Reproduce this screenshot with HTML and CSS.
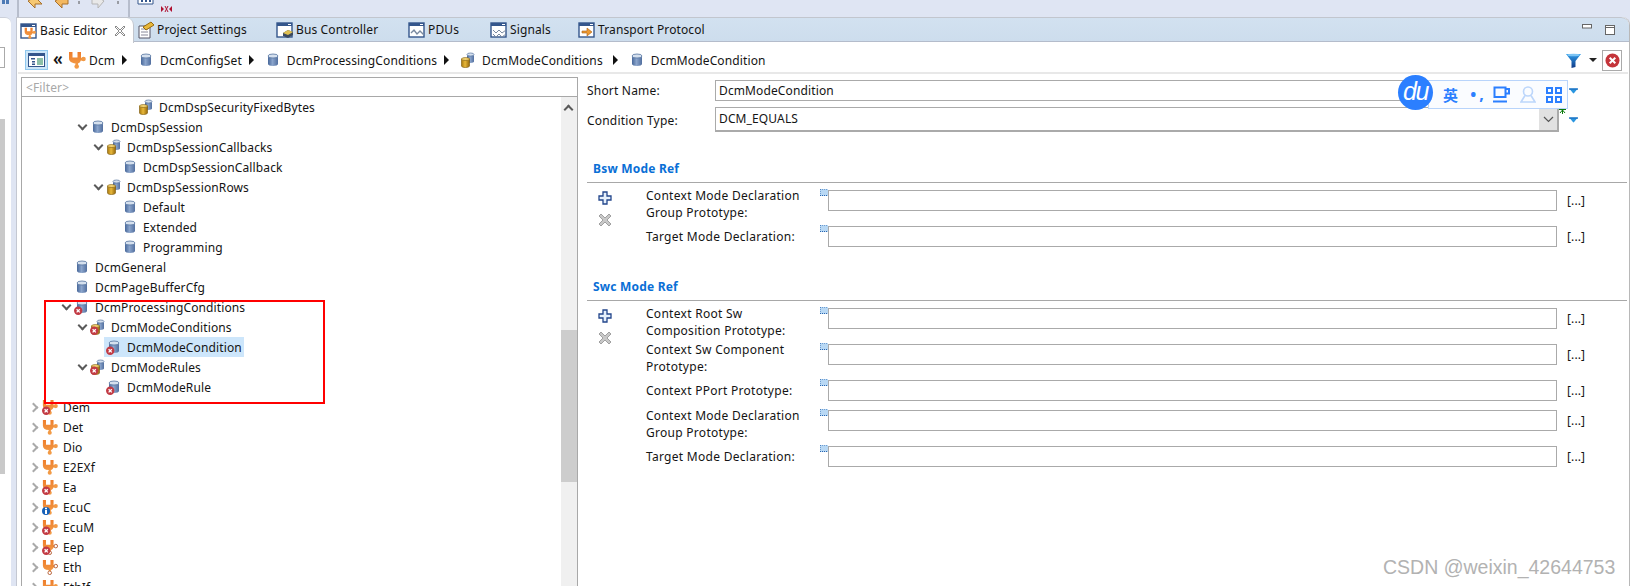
FILE: index.html
```html
<!DOCTYPE html>
<html lang="en">
<head>
<meta charset="utf-8">
<title>Basic Editor</title>
<link rel="stylesheet" href="styles.css">
</head>
<body>
<svg class="defs" aria-hidden="true">
  <defs>
    <linearGradient id="gb" x1="0" x2="1" y1="0" y2="0"><stop offset="0" stop-color="#48689a"/><stop offset=".45" stop-color="#8aa4cb"/><stop offset="1" stop-color="#526f9f"/></linearGradient>
    <linearGradient id="gy" x1="0" x2="1" y1="0" y2="0"><stop offset="0" stop-color="#a97a10"/><stop offset=".45" stop-color="#e8b83a"/><stop offset="1" stop-color="#96690c"/></linearGradient>
    <linearGradient id="gf" x1="0" x2="0" y1="0" y2="1"><stop offset="0" stop-color="#2d9be8"/><stop offset="1" stop-color="#123a86"/></linearGradient>
    <linearGradient id="go" x1="0" x2="0" y1="0" y2="1"><stop offset="0" stop-color="#ee7d2c"/><stop offset="1" stop-color="#f29a45"/></linearGradient>
    <symbol id="cyl" viewBox="0 0 16 16"><path d="M3 4v8c0 1.100 2.200 2 5 2s5-.9 5-2V4z" fill="url(#gb)"/><ellipse cx="8" cy="4" rx="5" ry="2" fill="#d5e0ee" stroke="#54739f" stroke-width=".8"/></symbol>
    <symbol id="box" viewBox="0 0 16 16"><path d="M7 2.500v7c0 .8 1.500 1.400 3.500 1.400S14 10.300 14 9.500v-7z" fill="url(#gb)"/><ellipse cx="10.500" cy="2.500" rx="3.500" ry="1.500" fill="#d5e0ee" stroke="#54739f" stroke-width=".7"/><path d="M1.500 7v7c0 .9 1.600 1.500 3.800 1.500S9.500 14.900 9.500 14V7z" fill="url(#gy)" stroke="#7a5708" stroke-width=".6"/><ellipse cx="5.500" cy="7" rx="4" ry="1.500" fill="#f0d070" stroke="#7a5708" stroke-width=".6"/></symbol>
    <symbol id="fork" viewBox="0 0 18 18"><path d="M1 1h3.500v5.500h5V1H13v6h2v2.500h-2.200c-.5 1.500-1.500 2.500-2.800 3V14H7.500v-1.500C3 12 1 10 1 7.500z" fill="url(#go)"/><circle cx="15.500" cy="8" r="2.300" fill="#f29a45"/><circle cx="8.700" cy="15.500" r="2.300" fill="#f29a45"/></symbol>
    <symbol id="fork2" viewBox="0 0 18 18"><path d="M1 1h3.500v5.500h5V1H13v6h1v2.500h-1.200c-.5 1.500-1.500 2.500-2.800 3V14H7.500v-1.500C3 12 1 10 1 7.500z" fill="url(#go)"/><circle cx="15.500" cy="8" r="2" fill="#fff" stroke="#b0552a"/><circle cx="8.700" cy="15.500" r="2" fill="#fff" stroke="#b0552a"/></symbol>
    <symbol id="err" viewBox="0 0 16 16"><circle cx="4.200" cy="11.800" r="4.200" fill="#c23a44"/><path d="M2.600 10.200l3.200 3.200m0-3.200l-3.200 3.200" stroke="#fff" stroke-width="1.300"/></symbol>
    <symbol id="info" viewBox="0 0 16 16"><circle cx="4" cy="12" r="4" fill="#1560b8"/><path d="M3 11h2v4H3zM3 8.800h2v1.400H3z" fill="#fff"/></symbol>
    <symbol id="win" viewBox="0 0 18 18"><rect x="1" y="2" width="15" height="14" fill="#fff" stroke="#34568c" stroke-width="1.400"/><path d="M1 2h15v3H1z" fill="#34568c"/><path d="M12 3h3v1h-3z" fill="#fff"/></symbol>
    <symbol id="plus" viewBox="0 0 14 14"><path d="M5 1h4v4h4v4H9v4H5V9H1V5h4z" fill="#e6f0fb" stroke="#23468c" stroke-width="1.300"/></symbol>
    <symbol id="cross" viewBox="0 0 14 14"><path d="M3 1l4 4 4-4 2 2-4 4 4 4-2 2-4-4-4 4-2-2 4-4-4-4z" fill="#c8c8c8" stroke="#a0a0a0"/></symbol>
    <symbol id="deco" viewBox="0 0 8 7"><rect width="8" height="7" fill="#b8d8f4"/><path d="M0 0h8M0 0v7M0 6.500h8" stroke="#2b66b0" stroke-dasharray="1 1"/></symbol>
    <symbol id="tri" viewBox="0 0 10 6"><path d="M0 0h10L5 6z" fill="#2a96e0"/><path d="M0 0h10v1.500H0z" fill="#1f70c0"/></symbol>
  </defs>
</svg>

<div class="page">
  <div class="toolbar">
    <svg class="toolbar-strip" viewBox="0 0 180 17" width="180" height="17">
      <path d="M2-2h3v6H2zM6-2h3v6H6z" fill="#4d7ab5"/>
      <path d="M18 0v17" stroke="#8f96a6"/>
      <path d="M28 1l7 7V4h7L35-3z" fill="#f6c872" stroke="#a8702a"/>
      <path d="M55 1l7 7V4h6V-3h-6z" fill="#f3b860" stroke="#a8702a"/>
      <path d="M79 1v3" stroke="#555"/>
      <path d="M104 1l-6 7V4h-6V-3h6z" fill="#e8e8e8" stroke="#b5b5b5"/>
      <path d="M118 1v3" stroke="#555"/>
      <path d="M129 0v17" stroke="#8f96a6"/>
      <path d="M138-2v6h15v-6" fill="#fff" stroke="#34568c"/>
      <path d="M141 0h2v2h-2zM145 0h2v2h-2zM149 0h2v2h-2z" fill="#34568c"/>
      <path d="M161 6l3 3-3 3zM172 6l-3 3 3 3z" fill="#b01030"/><path d="M165 6l3 6m0-6l-3 6" stroke="#b01030"/>
    </svg>
  </div>

  <div class="workspace">
    <aside class="side-stub">
      <div class="stub-input"></div>
      <div class="stub-thumb"></div>
    </aside>

    <main class="editor">
      <nav class="tabs">
        <div class="tab tab-active">
          <svg class="tab-ic"><use href="#win"/><use href="#fork" x="4" y="5" width="12" height="12"/></svg>
          <span>Basic Editor</span>
          <svg class="tab-close" viewBox="0 0 12 12"><path d="M2 1l4 4 4-4 1 1-4 4 4 4-1 1-4-4-4 4-1-1 4-4-4-4z" fill="#fff" stroke="#8a8a8a"/></svg>
        </div>
        <div class="tab tab-project">
          <svg class="tab-ic"><path d="M2 5h11v12H2z" fill="#fff" stroke="#556"/><path d="M4 8h7M4 11h7M4 14h7" stroke="#889"/><path d="M6 6l8-5 3 3-8 5z" fill="#e8b83a" stroke="#96690c"/></svg>
          <span>Project Settings</span>
        </div>
        <div class="tab tab-bus">
          <svg class="tab-ic"><use href="#win"/><path d="M7 12l5-3 5 2v3l-5 3-5-2z" fill="#3b4a60"/><path d="M7 12l5-3 5 2-5 3z" fill="#e0c050"/></svg>
          <span>Bus Controller</span>
        </div>
        <div class="tab tab-pdu">
          <svg class="tab-ic"><use href="#win"/><path d="M3 12l3-3 3 4 3-3 4 4" fill="none" stroke="#7a8aa0" stroke-width="1.400"/></svg>
          <span>PDUs</span>
        </div>
        <div class="tab tab-sig">
          <svg class="tab-ic"><use href="#win"/><path d="M3 9l3 3 3-3 3 3 4-3M3 13l3 3 3-3 3 3 4-3" fill="none" stroke="#7a8aa0"/></svg>
          <span>Signals</span>
        </div>
        <div class="tab tab-tp">
          <svg class="tab-ic"><use href="#win"/><path d="M4 10h5V7l5 4-5 4v-3H4z" fill="#ee9a30" stroke="#a8601a" stroke-width=".6"/></svg>
          <span>Transport Protocol</span>
        </div>
        <div class="tab-controls">
          <svg width="10" height="5" viewBox="0 0 10 5" class="min-ic"><rect x=".5" y=".5" width="9" height="3.500" fill="#fff" stroke="#666"/></svg>
          <svg width="10" height="10" viewBox="0 0 10 10" class="max-ic"><rect x=".5" y=".5" width="9" height="9" fill="#fff" stroke="#666"/><path d="M0 2.500h10" stroke="#666" stroke-width="1.200"/></svg>
        </div>
      </nav>

      <div class="crumbs">
        <button class="toggle" type="button" aria-label="Toggle tree"><svg width="17" height="14" viewBox="0 0 17 14"><rect x=".5" y=".5" width="16" height="13" fill="#fff" stroke="#34568c"/><path d="M0 0h17v3H0z" fill="#34568c"/><path d="M9 5h6v7H9z" fill="#8cc0a8"/><path d="M3 5h4v1.500H3zM4 8h3v1.500H4zM4 10.500h3V12H4z" fill="#34568c"/></svg></button>
        <span class="chev-back">«</span>
        <svg class="ic-fork"><use href="#fork"/></svg>
        <span class="crumb-text crumb-first">Dcm</span>
        <i class="crumb-arrow"></i>
        <svg class="ic"><use href="#cyl"/></svg>
        <span class="crumb-text">DcmConfigSet</span>
        <i class="crumb-arrow"></i>
        <svg class="ic"><use href="#cyl"/></svg>
        <span class="crumb-text">DcmProcessingConditions</span>
        <i class="crumb-arrow"></i>
        <svg class="ic"><use href="#box"/></svg>
        <span class="crumb-text">DcmModeConditions</span>
        <i class="crumb-arrow crumb-arrow-last"></i>
        <svg class="ic"><use href="#cyl"/></svg>
        <span class="crumb-text">DcmModeCondition</span>
        <div class="crumb-tools">
          <svg width="15" height="15" viewBox="0 0 15 15"><path d="M0 1h15L9.500 8v6l-4 1V8z" fill="url(#gf)"/><ellipse cx="7.500" cy="2" rx="6.500" ry="1.300" fill="#7cc4f4"/></svg>
          <i class="menu-tri"></i>
          <span class="err-btn"><svg width="15" height="15" viewBox="0 0 15 15"><circle cx="7.500" cy="7.500" r="7" fill="#c4343a"/><path d="M4.700 4.700l5.600 5.600m0-5.600l-5.600 5.600" stroke="#fff" stroke-width="2"/></svg></span>
        </div>
      </div>

      <div class="split">
        <section class="tree-pane">
          <div class="filter">&lt;Filter&gt;</div>
          <div class="tree-body">
            <div class="tree">
              <div class="row l6"><svg class="ic"><use href="#box"/></svg><span>DcmDspSecurityFixedBytes</span></div>
              <div class="row l3 open"><svg class="ic"><use href="#cyl"/></svg><span>DcmDspSession</span></div>
              <div class="row l4 open"><svg class="ic"><use href="#box"/></svg><span>DcmDspSessionCallbacks</span></div>
              <div class="row l5"><svg class="ic"><use href="#cyl"/></svg><span>DcmDspSessionCallback</span></div>
              <div class="row l4 open"><svg class="ic"><use href="#box"/></svg><span>DcmDspSessionRows</span></div>
              <div class="row l5"><svg class="ic"><use href="#cyl"/></svg><span>Default</span></div>
              <div class="row l5"><svg class="ic"><use href="#cyl"/></svg><span>Extended</span></div>
              <div class="row l5"><svg class="ic"><use href="#cyl"/></svg><span>Programming</span></div>
              <div class="row l2"><svg class="ic"><use href="#cyl"/></svg><span>DcmGeneral</span></div>
              <div class="row l2"><svg class="ic"><use href="#cyl"/></svg><span>DcmPageBufferCfg</span></div>
              <div class="row l2 open"><svg class="ic"><use href="#cyl"/><use href="#err"/></svg><span>DcmProcessingConditions</span></div>
              <div class="row l3 open"><svg class="ic"><use href="#box"/><use href="#err"/></svg><span>DcmModeConditions</span></div>
              <div class="row l4"><div class="selected"><svg class="ic"><use href="#cyl"/><use href="#err"/></svg><span>DcmModeCondition</span></div></div>
              <div class="row l3 open"><svg class="ic"><use href="#box"/><use href="#err"/></svg><span>DcmModeRules</span></div>
              <div class="row l4"><svg class="ic"><use href="#cyl"/><use href="#err"/></svg><span>DcmModeRule</span></div>
              <div class="row l0 shut"><svg class="ic"><use href="#fork"/><use href="#err"/></svg><span>Dem</span></div>
              <div class="row l0 shut"><svg class="ic"><use href="#fork"/></svg><span>Det</span></div>
              <div class="row l0 shut"><svg class="ic"><use href="#fork"/></svg><span>Dio</span></div>
              <div class="row l0 shut"><svg class="ic"><use href="#fork"/></svg><span>E2EXf</span></div>
              <div class="row l0 shut"><svg class="ic"><use href="#fork"/><use href="#err"/></svg><span>Ea</span></div>
              <div class="row l0 shut"><svg class="ic"><use href="#fork"/><use href="#info"/></svg><span>EcuC</span></div>
              <div class="row l0 shut"><svg class="ic"><use href="#fork"/><use href="#err"/></svg><span>EcuM</span></div>
              <div class="row l0 shut"><svg class="ic"><use href="#fork2"/><use href="#err"/></svg><span>Eep</span></div>
              <div class="row l0 shut"><svg class="ic"><use href="#fork2"/></svg><span>Eth</span></div>
              <div class="row l0 shut"><svg class="ic"><use href="#fork"/></svg><span>EthIf</span></div>
            </div>
            <div class="scrollbar"><span class="scroll-up"></span><div class="scroll-thumb"></div></div>
          </div>
        </section>

        <section class="form-pane">
          <div class="top-field top-name">
            <label class="top-label">Short Name:</label>
            <div class="text-input">DcmModeCondition</div>
            <svg class="drop-tri" viewBox="0 0 10 6"><use href="#tri"/></svg>
          </div>
          <div class="top-field top-type">
            <label class="top-label">Condition Type:</label>
            <div class="combo"><span class="combo-val">DCM_EQUALS</span><span class="combo-btn"><svg width="11" height="7" viewBox="0 0 11 7"><path d="M1 1l4.500 4.500L10 1" fill="none" stroke="#555" stroke-width="1.200"/></svg></span></div>
            <svg class="drop-tri" viewBox="0 0 10 6"><use href="#tri"/></svg>
          </div>

          <div class="group group-bsw">
            <h2 class="group-title">Bsw Mode Ref</h2>
            <div class="group-body">
              <div class="group-tools">
                <svg class="tool"><use href="#plus"/></svg>
                <svg class="tool"><use href="#cross"/></svg>
              </div>
              <div class="fields">
                <div class="field"><div class="flabel two">Context Mode Declaration Group Prototype:</div><svg class="deco"><use href="#deco"/></svg><div class="finput"></div><span class="browse">[...]</span></div>
                <div class="field"><div class="flabel">Target Mode Declaration:</div><svg class="deco"><use href="#deco"/></svg><div class="finput"></div><span class="browse">[...]</span></div>
              </div>
            </div>
          </div>

          <div class="group group-swc">
            <h2 class="group-title">Swc Mode Ref</h2>
            <div class="group-body">
              <div class="group-tools">
                <svg class="tool"><use href="#plus"/></svg>
                <svg class="tool"><use href="#cross"/></svg>
              </div>
              <div class="fields">
                <div class="field"><div class="flabel two">Context Root Sw<br>Composition Prototype:</div><svg class="deco"><use href="#deco"/></svg><div class="finput"></div><span class="browse">[...]</span></div>
                <div class="field"><div class="flabel two">Context Sw Component<br>Prototype:</div><svg class="deco"><use href="#deco"/></svg><div class="finput"></div><span class="browse">[...]</span></div>
                <div class="field field-short"><div class="flabel">Context PPort Prototype:</div><svg class="deco"><use href="#deco"/></svg><div class="finput"></div><span class="browse">[...]</span></div>
                <div class="field"><div class="flabel two">Context Mode Declaration Group Prototype:</div><svg class="deco"><use href="#deco"/></svg><div class="finput"></div><span class="browse">[...]</span></div>
                <div class="field"><div class="flabel">Target Mode Declaration:</div><svg class="deco"><use href="#deco"/></svg><div class="finput"></div><span class="browse">[...]</span></div>
              </div>
            </div>
          </div>
        </section>
      </div>
    </main>
  </div>

  <div class="red-box"></div>

  <div class="ime">
    <span class="ime-logo">du</span>
    <span class="ime-bar">
      <span class="ime-zh">英</span>
      <span class="ime-punct">•,</span>
      <svg width="17" height="17" viewBox="0 0 17 17"><path d="M1.500 1.500h11v9.500h-11zM12.500 3h3.500v4.500h-3.500" fill="none" stroke="#2b7fff" stroke-width="2"/><path d="M0 15.500h14" stroke="#2b7fff" stroke-width="2"/></svg>
      <svg width="16" height="17" viewBox="0 0 16 17"><circle cx="8" cy="5.500" r="4.500" fill="none" stroke="#bcd6fb" stroke-width="1.600"/><path d="M5 9.500L1 16h14l-4-6.500" fill="none" stroke="#bcd6fb" stroke-width="1.600"/></svg>
      <svg width="16" height="16" viewBox="0 0 16 16"><path d="M1 1h5v5H1zM10 1h5v5h-5zM1 10h5v5H1zM10 10h5v5h-5z" fill="none" stroke="#2b7fff" stroke-width="2"/></svg>
    </span>
    <svg class="ime-star" width="7" height="5" viewBox="0 0 7 5"><path d="M0 .5h7M3.500 0v5M1 4l2.500-3L6 4" fill="none" stroke="#0a7a0a"/></svg>
  </div>

  <div class="watermark">CSDN @weixin_42644753</div>
</div>
</body>
</html>
```

FILE: styles.css
```css
*, *::before, *::after { box-sizing: border-box; }
html, body { margin: 0; padding: 0; }
body {
  width: 1630px;
  height: 586px;
  overflow: hidden;
  background: #dfe5f3;
  font-family: "Noto Sans", "Open Sans", sans-serif;
  font-size: 12px;
  letter-spacing: .12px;
  color: #141414;
}
.defs { display: block; width: 0; height: 0; }
.page { position: relative; width: 1630px; height: 586px; overflow: hidden; display: flex; flex-direction: column; }

.toolbar { height: 17px; flex: none; }
.toolbar-strip { display: block; overflow: hidden; }

.workspace { flex: 1; display: flex; min-height: 0; }

.side-stub {
  width: 11px;
  flex: none;
  background: #fff;
  border-top-right-radius: 6px;
  border-top: 1px solid #ccd0da;
  display: flex;
  flex-direction: column;
}
.stub-input { width: 5px; height: 21px; margin-top: 29px; border: 1px solid #aaa; border-left: 0; }
.stub-thumb {
  width: 5px;
  height: 355px;
  margin-top: 51px;
  background: #c9c9c9;
}

.editor {
  width: 1614px;
  margin-left: 5px;
  flex: none;
  display: flex;
  flex-direction: column;
  background: #fff;
  border-right: 1px solid #b8b8b8;
  border-left: 1px solid #c4c8d2;
  border-top-right-radius: 8px;
  overflow: hidden;
}

.tabs {
  height: 25px;
  flex: none;
  display: flex;
  align-items: center;
  background: linear-gradient(#d2e1f0, #cddded);
  border-top: 1px solid #c2c6ce;
  border-bottom: 1px solid #b4bccb;
  border-top-right-radius: 8px;
}
.tab { display: flex; align-items: center; height: 24px; flex: none; }
.tab span { line-height: 24px; }
.tab-ic { width: 18px; height: 18px; margin-right: 2px; flex: none; overflow: visible; }
.tab-active {
  width: 117px;
  height: 25px;
  margin-top: 1px;
  margin-bottom: -1px;
  padding-left: 3px;
  background: #fff;
  border-right: 1px solid #c2c6ce;
  border-top-right-radius: 7px;
}
.tab-close { width: 12px; height: 12px; margin-left: 7px; }
.tab-project { margin-left: 3px; width: 139px; }
.tab-bus { width: 132px; }
.tab-pdu { width: 82px; }
.tab-sig { width: 88px; }
.tab-tp { width: auto; }
.tab-controls { margin-left: auto; display: flex; align-items: center; gap: 13px; padding-right: 14px; }
.min-ic { margin-top: -6px; }
.max-ic { margin-top: 1px; }

.crumbs {
  height: 32px;
  flex: none;
  display: flex;
  align-items: center;
  margin: 0 1px 0 1px;
  padding: 6px 0 0 7px;
  border-bottom: 2px solid #e8e8e8;
}
.toggle {
  width: 23px;
  height: 20px;
  padding: 0;
  display: flex;
  align-items: center;
  justify-content: center;
  background: #cde6f8;
  border: 1px solid #90c8ee;
}
.chev-back { width: 15px; margin-left: 5px; font-size: 17px; line-height: 20px; font-weight: 600; margin-top: -3px; }
.ic-fork { width: 18px; height: 18px; flex: none; }
.ic { width: 16px; height: 16px; flex: none; overflow: visible; }
.crumb-text { margin-left: 6px; white-space: nowrap; }
.crumb-first { margin-left: 3px; }
.crumb-arrow {
  width: 0;
  height: 0;
  flex: none;
  margin: 0 11px 0 7px;
  border-left: 5px solid #111;
  border-top: 5px solid transparent;
  border-bottom: 5px solid transparent;
}
.crumb-arrow-last { margin-left: 10px; }
.crumb-tools { margin-left: auto; display: flex; align-items: center; padding-right: 6px; }
.menu-tri {
  width: 0;
  height: 0;
  margin: 0 5px 0 8px;
  border-top: 4px solid #222;
  border-left: 4px solid transparent;
  border-right: 4px solid transparent;
}
.err-btn {
  width: 20px;
  height: 21px;
  display: flex;
  align-items: center;
  justify-content: center;
  border: 1px solid #aaa;
}

.split { flex: 1; min-height: 0; display: flex; padding-top: 3px; }

.tree-pane {
  width: 557px;
  margin-left: 4px;
  flex: none;
  display: flex;
  flex-direction: column;
  border: 1px solid #a8a8a8;
  border-bottom: 0;
}
.filter {
  height: 19px;
  flex: none;
  padding-left: 4px;
  line-height: 20px;
  color: #a8a8a8;
  border-bottom: 1px solid #a8a8a8;
}
.tree-body { flex: 1; min-height: 0; display: flex; }
.tree { flex: 1; min-width: 0; overflow: hidden; }
.row {
  height: 20px;
  display: flex;
  align-items: center;
  white-space: nowrap;
}
.row .ic { margin-right: 5px; }
.row::before {
  content: "";
  width: 8px;
  height: 8px;
  flex: none;
  margin: 0 4px 0 4px;
}
.row.open::before {
  width: 7px;
  height: 7px;
  margin: -3px 4.500px 0 4.500px;
  border-right: 2px solid #5a5a5a;
  border-bottom: 2px solid #5a5a5a;
  transform: rotate(45deg);
}
.row.shut::before {
  width: 7px;
  height: 7px;
  margin: 0 5.500px 0 3.500px;
  border-right: 2px solid #aaa;
  border-top: 2px solid #aaa;
  transform: rotate(45deg);
}
.l0 { padding-left: 4px; }
.l2 { padding-left: 36px; }
.l3 { padding-left: 52px; }
.l4 { padding-left: 68px; }
.l5 { padding-left: 84px; }
.l6 { padding-left: 100px; }
.selected {
  display: flex;
  align-items: center;
  height: 20px;
  margin-left: -2px;
  padding: 0 2px;
  background: #cde6fb;
}

.scrollbar {
  width: 16px;
  flex: none;
  background: #f0f0f0;
}
.scroll-up {
  display: block;
  width: 7px;
  height: 7px;
  margin: 9px 0 0 4px;
  border-left: 2px solid #5a5a5a;
  border-top: 2px solid #5a5a5a;
  transform: rotate(45deg);
}
.scroll-thumb { width: 16px; height: 152px; margin-top: 217px; background: #cdcdcd; }

.form-pane { flex: 1; min-width: 0; padding: 3px 2px 0 9px; }
.top-field { display: flex; align-items: center; }
.top-name { height: 21px; }
.top-type { height: 25px; margin-top: 6px; }
.top-label { width: 128px; flex: none; letter-spacing: .2px; }
.top-type .top-label { padding-top: 2px; }
.text-input {
  width: 844px;
  height: 21px;
  line-height: 19px;
  padding-left: 3px;
  border: 1px solid #aaa;
  flex: none;
}
.combo {
  width: 844px;
  height: 25px;
  display: flex;
  flex: none;
  border: 1px solid #aaa;
  border-width: 1px 2px 2px 1px;
}
.combo-val { flex: 1; padding-left: 3px; line-height: 21px; }
.combo-btn { width: 18px; display: flex; align-items: center; justify-content: center; background: #e1e1e1; }
.drop-tri { width: 9px; height: 6px; margin-left: 10px; flex: none; }

.group-bsw { margin-top: 26px; }
.group-swc { margin-top: 14px; }
.group-title {
  height: 25px;
  margin: 0;
  padding-left: 6px;
  font-size: 12px;
  line-height: 22px;
  font-weight: 700;
  letter-spacing: .2px;
  color: #0a6fd6;
  border-bottom: 1px solid #a8a8a8;
}
.group-body { display: flex; padding-top: 7px; }
.group-tools { width: 59px; flex: none; display: flex; flex-direction: column; gap: 8px; padding: 1px 0 0 11px; }
.tool { width: 14px; height: 14px; display: block; }
.fields { flex: 1; min-width: 0; }
.field { height: 36px; display: flex; align-items: flex-start; }
.field-short { height: 30px; }
.flabel { width: 174px; flex: none; line-height: 21px; letter-spacing: .28px; }
.flabel.two { line-height: 17px; margin-top: -3px; padding-right: 14px; }
.deco { width: 8px; height: 7px; flex: none; margin-top: -1px; }
.finput { width: 729px; height: 21px; flex: none; border: 1px solid #aaa; }
.browse { margin-left: 10px; line-height: 21px; }

.red-box {
  position: absolute;
  left: 44px;
  top: 300px;
  width: 281px;
  height: 104px;
  border: 2px solid #f00;
}

.ime {
  position: absolute;
  left: 1398px;
  top: 75px;
  width: 170px;
  height: 35px;
}
.ime-logo {
  position: absolute;
  left: 0;
  top: 0;
  width: 35px;
  height: 35px;
  border-radius: 50%;
  background: #2b7fff;
  color: #fff;
  font-size: 25px;
  font-style: italic;
  letter-spacing: -1.500px;
  line-height: 32px;
  text-align: center;
  z-index: 1;
  font-family: "Liberation Sans", sans-serif;
}
.ime-bar {
  position: absolute;
  left: 30px;
  top: 5px;
  width: 140px;
  height: 29px;
  display: flex;
  align-items: center;
  padding-left: 14px;
  gap: 10px;
  background: #fafcff;
  border: 1px solid #b8d4fb;
}
.ime-zh { font-family: "Noto Sans CJK SC", sans-serif; font-size: 15px; font-weight: 700; color: #2b7fff; line-height: 20px; margin-right: 2px; }
.ime-punct { width: 13px; font-size: 16px; font-weight: 700; letter-spacing: 3px; color: #2b7fff; line-height: 20px; margin-top: -2px; }
.ime-star { position: absolute; left: 161px; top: 34px; }

.watermark {
  position: absolute;
  left: 1383px;
  top: 556px;
  font-family: "Liberation Sans", sans-serif;
  font-size: 19.500px;
  letter-spacing: 0;
  line-height: 22px;
  color: #b2b2b2;
  white-space: nowrap;
}
```
